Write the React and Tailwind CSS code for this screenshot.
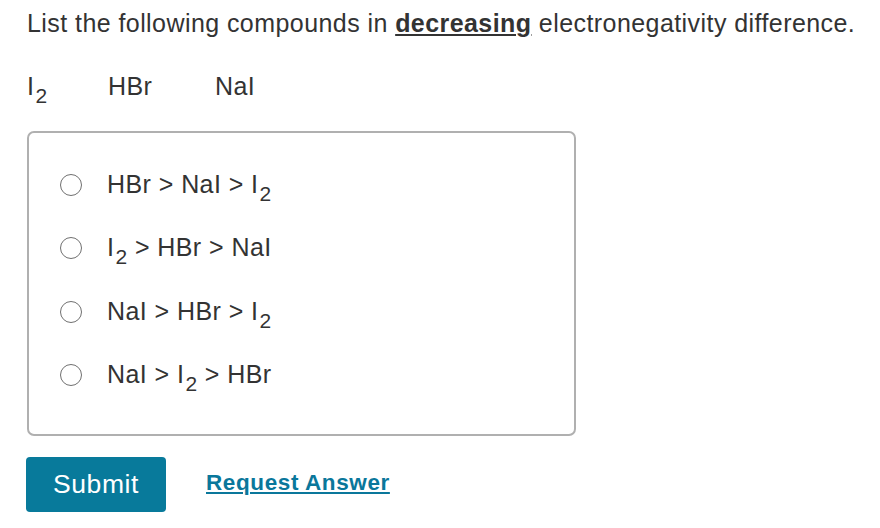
import React from "react";

const I2 = () => (
  <span className="whitespace-nowrap">
    I<span className="relative top-[8px] text-[0.84em] ml-[1px]">2</span>
  </span>
);

const options = [
  [<span key="a">HBr &gt; NaI &gt; </span>, <I2 key="b" />],
  [<I2 key="c" />, <span key="d"> &gt; HBr &gt; NaI</span>],
  [<span key="e">NaI &gt; HBr &gt; </span>, <I2 key="f" />],
  [<span key="g">NaI &gt; </span>, <I2 key="h" />, <span key="i"> &gt; HBr</span>],
];

export default function App() {
  return (
    <div
      className="w-[880px] h-[528px] bg-white text-[#333333] pl-[27px] pt-[7px] tracking-[0.43px]"
      style={{ fontFamily: '"Liberation Sans", Arial, sans-serif' }}
    >
      <p className="text-[25px] leading-[32px] whitespace-nowrap">
        List the following compounds in{" "}
        <b className="underline decoration-[2px] underline-offset-[2px]">decreasing</b>{" "}
        electronegativity difference.
      </p>
      <div className="flex text-[25px] leading-[32px] mt-[31px]">
        <span className="w-[81px]"><I2 /></span>
        <span className="w-[107px]">HBr</span>
        <span>NaI</span>
      </div>
      <div className="mt-[27px] w-[549px] h-[305px] border-2 border-[#b0b0b0] rounded-[7px] pl-[31px] pt-[36px] flex flex-col gap-[31.4px]">
        {options.map((o, i) => (
          <label key={i} className="flex items-center text-[25px] leading-[32px] h-[32px]">
            <span className="w-[22px] h-[22px] shrink-0 rounded-full border-[1.5px] border-[#707070] mr-[25px]" />
            <span className="whitespace-pre">{o}</span>
          </label>
        ))}
      </div>
      <div className="flex items-center mt-[21px]">
        <button className="w-[140px] h-[55px] bg-[#087a9b] rounded-[4px] text-white text-[26.5px] tracking-[0.6px] ml-[-1px]">
          Submit
        </button>
        <a className="ml-[40px] text-[22.5px] tracking-[0.6px] font-bold text-[#0a779b] underline decoration-[2px] underline-offset-[2px] mb-[3px]">
          Request Answer
        </a>
      </div>
    </div>
  );
}
